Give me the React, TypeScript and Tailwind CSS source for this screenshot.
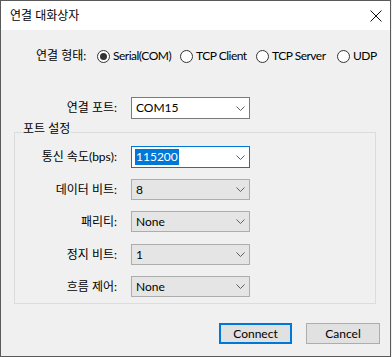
import type { ReactNode } from 'react';

const font = { fontFamily: 'Lato, "Noto Sans CJK KR", sans-serif' };

const Chevron = () => (
    <svg width="9" height="5" viewBox="0 0 9 5" className="shrink-0">
        <polyline points="0.5,0.5 4.5,4.5 8.5,0.5" fill="none" stroke="#5f5f5f" strokeWidth="1" />
    </svg>
);

const Radio = ({ label, checked = false, width }: { label: string; checked?: boolean; width: string }) => (
    <div className={`flex items-center gap-[3px] ${width}`}>
        <span className="w-[13px] h-[13px] rounded-full border border-[#333333] bg-white flex items-center justify-center shrink-0">
            {checked && <span className="w-[7px] h-[7px] rounded-full bg-[#333333]" />}
        </span>
        <span className="text-[12px] leading-[16px] tracking-[-0.5px] text-black whitespace-nowrap">{label}</span>
    </div>
);

interface ComboProps {
    value: string;
    variant?: 'edit' | 'focus' | 'list';
}

const Combo = ({ value, variant = 'list' }: ComboProps) => {
    const box =
        variant === 'focus'
            ? 'bg-white border-[#0078d7] h-[22px]'
            : variant === 'edit'
              ? 'bg-white border-[#7a7a7a] h-[22px]'
              : 'bg-[#e5e5e5] border-[#adadad] h-[21px]';

    return (
        <div className={`w-[119px] border flex items-center justify-between pl-[3px] pr-[4px] ${box}`}>
            {variant === 'focus' ? (
                <span className="bg-[#0078d7] text-white text-[12px] leading-[16px] px-[1px]">{value}</span>
            ) : (
                <span className="text-[12px] leading-[16px] text-black pl-[1px]">{value}</span>
            )}
            <Chevron />
        </div>
    );
};

const Row = ({ label, labelWidth, children, className = '' }: { label: string; labelWidth: string; children: ReactNode; className?: string }) => (
    <div className={`flex items-center ${className}`}>
        <span className={`${labelWidth} text-right text-[12px] leading-[16px] text-black whitespace-nowrap`}>{label}</span>
        <div className="ml-[14px]">{children}</div>
    </div>
);

export default function App() {
    return (
        <div className="w-[392px] h-[357px] bg-[#f0f0f0]" style={font}>
            <div className="w-[391px] h-[357px] border border-[#5a5a5a] flex flex-col bg-[#f0f0f0]">
                {/* Title bar */}
                <div className="h-[29px] bg-white flex items-center justify-between pl-[9px] pr-[8px] shrink-0">
                    <span className="text-[12px] leading-[16px] text-black">연결 대화상자</span>
                    <svg width="12" height="12" viewBox="0 0 12 12">
                        <path d="M0.5 0.5 L11.5 11.5 M11.5 0.5 L0.5 11.5" stroke="#111111" strokeWidth="1" />
                    </svg>
                </div>

                {/* Connection type */}
                <div className="flex items-center h-[20px] mt-[16px] pl-[35px]">
                    <span className="w-[61px] text-[12px] leading-[16px] text-black whitespace-nowrap">연결 형태:</span>
                    <Radio label="Serial(COM)" checked width="w-[83px]" />
                    <Radio label="TCP Client" width="w-[76px]" />
                    <Radio label="TCP Server" width="w-[81px]" />
                    <Radio label="UDP" width="w-[40px]" />
                </div>

                {/* Port */}
                <Row label="연결 포트:" labelWidth="w-[116px]" className="mt-[31px]">
                    <Combo value="COM15" variant="edit" />
                </Row>

                {/* Port settings group */}
                <fieldset className="ml-[13px] mt-[3px] w-[362px] border border-[#dcdcdc] pt-[4px] pb-[6px]">
                    <legend className="ml-[7px] px-[1px] pb-[6px] text-[12px] leading-[14px] text-black">포트 설정</legend>
                    <Row label="통신 속도(bps):" labelWidth="w-[102px]">
                        <Combo value="115200" variant="focus" />
                    </Row>
                    <Row label="데이터 비트:" labelWidth="w-[102px]" className="mt-[11px]">
                        <Combo value="8" />
                    </Row>
                    <Row label="패리티:" labelWidth="w-[102px]" className="mt-[11px]">
                        <Combo value="None" />
                    </Row>
                    <Row label="정지 비트:" labelWidth="w-[102px]" className="mt-[12px]">
                        <Combo value="1" />
                    </Row>
                    <Row label="흐름 제어:" labelWidth="w-[102px]" className="mt-[11px]">
                        <Combo value="None" />
                    </Row>
                </fieldset>

                {/* Buttons */}
                <div className="flex justify-end gap-[14px] pr-[10px] mt-[19px]">
                    <button className="w-[73px] h-[21px] bg-[#e1e1e1] border-2 border-[#0078d7] text-[12px] leading-[16px] text-black">
                        Connect
                    </button>
                    <button className="w-[74px] h-[21px] bg-[#e1e1e1] border border-[#adadad] text-[12px] leading-[16px] text-black">
                        Cancel
                    </button>
                </div>
            </div>
        </div>
    );
}
